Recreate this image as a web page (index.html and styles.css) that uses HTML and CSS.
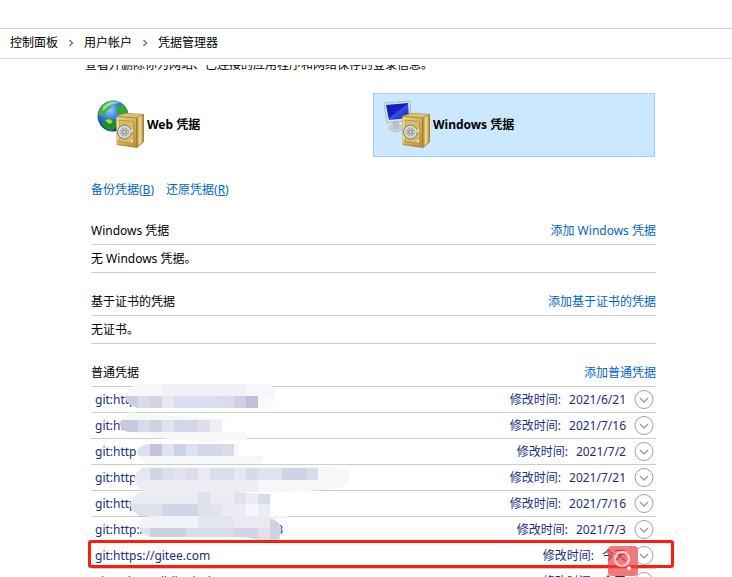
FILE: index.html
```html
<!DOCTYPE html>
<html lang="zh-CN">
<head>
<meta charset="utf-8">
<title>凭据管理器</title>
<link rel="stylesheet" href="styles.css">
</head>
<body>
<svg class="defs" aria-hidden="true">
  <defs>
    <linearGradient id="gold" x1="0" y1="0" x2="1" y2="1">
      <stop offset="0" stop-color="#ecd88c"/><stop offset=".6" stop-color="#cfae57"/><stop offset="1" stop-color="#b9933a"/>
    </linearGradient>
    <linearGradient id="gold-side" x1="0" y1="0" x2="1" y2="0">
      <stop offset="0" stop-color="#a07a24"/><stop offset=".5" stop-color="#f2e09a"/><stop offset="1" stop-color="#a88432"/>
    </linearGradient>
    <radialGradient id="sea" cx=".4" cy=".3" r=".7">
      <stop offset="0" stop-color="#8fd0ff"/><stop offset=".45" stop-color="#2b7de0"/><stop offset="1" stop-color="#0a2c8c"/>
    </radialGradient>
    <linearGradient id="screen" x1="0" y1="0" x2="1" y2="1">
      <stop offset="0" stop-color="#0a1fa8"/><stop offset=".5" stop-color="#1424c4"/><stop offset=".52" stop-color="#3a52e6"/><stop offset="1" stop-color="#1018b4"/>
    </linearGradient>
    <symbol id="safe" viewBox="0 0 30 37">
      <path d="M1 4 11 1 29 2 29 30 22 36 2 33Z" fill="#a8863a"/>
      <path d="M2 4 11 1.500 28 2.500 21 5.500Z" fill="#dcc070"/>
      <path d="M21.500 6 28.500 3V29.500L21.500 35Z" fill="url(#gold-side)"/>
      <path d="M1.500 5 21 6.500V34.500L1.500 32Z" fill="url(#gold)"/>
      <path d="M4 8 18.500 9.500V31.500L4 29.500Z" fill="#d9bc68" stroke="#b8964a"/>
      <path d="M3 9v19" stroke="#fff0b0"/>
      <circle cx="9.500" cy="20" r="7" fill="#a8a8a2" stroke="#85857d"/>
      <circle cx="9.500" cy="20" r="5.500" fill="none" stroke="#dededa" stroke-width="1.500"/>
      <path d="M9.500 14.500v11M4 20h11M5.600 16l7.800 8M13.400 16l-7.800 8" stroke="#dededa"/>
      <circle cx="9.500" cy="20" r="2" fill="#c9c9c5" stroke="#696965" stroke-width=".6"/>
      <path d="M17 17v3M17 28v2" stroke="#eee" stroke-width="1.500"/>
    </symbol>
    <symbol id="expand" viewBox="0 0 20 20">
      <circle cx="10" cy="9.500" r="9" fill="none" stroke="#a0a0a0" stroke-width="1"/>
      <path d="m6 8 4 4 4-4" fill="none" stroke="#a0a0a0" stroke-width="1.500"/>
    </symbol>
  </defs>
</svg>

<div class="toolbar"></div>
<nav class="breadcrumb" aria-label="路径">
  <a href="#">控制面板</a>
  <svg class="sep" viewBox="0 0 6 8"><path d="m1.500 1 3 3-3 3"/></svg>
  <a href="#">用户帐户</a>
  <svg class="sep" viewBox="0 0 6 8"><path d="m1.500 1 3 3-3 3"/></svg>
  <a href="#">凭据管理器</a>
</nav>

<main class="pane">
  <p class="intro">查看并删除你为网站、已连接的应用程序和网络保存的登录信息。</p>

  <div class="vaults">
    <button class="vault" type="button">
      <svg class="vault-icon" viewBox="0 0 50 50">
        <circle cx="16" cy="16" r="15.500" fill="url(#sea)"/>
        <path d="M3 9C6 4 10 2 14 1l4 2-3 2-2 4-4 2-1 4-4 1-3-2Z" fill="#4fb338"/>
        <path d="M7 20l6-2 6 4 1 4-5 5c-5 0-8-4-10-7Z" fill="#1f8f2e"/>
        <path d="M20 6l6-2c3 3 5 7 5 11l-5 2-4-3-3-1Z" fill="#36a43c"/>
        <path d="M6 7c4-5 12-7 17-4-5 0-12 2-17 8Z" fill="#d8f2ff" opacity=".6"/>
        <path d="M8 20l5-1 3 3-4 2Z" fill="#9ae04e"/>
        <use href="#safe" x="18" y="12" width="30" height="37"/>
      </svg>
      <span>Web 凭据</span>
    </button>
    <button class="vault selected" type="button">
      <svg class="vault-icon" viewBox="0 0 50 50">
        <ellipse cx="13" cy="28" rx="7" ry="3.500" fill="#cfd4d9" stroke="#a5acb4" stroke-width=".6"/>
        <path d="M9 20l7 2v7h-6Z" fill="#b9c0c8"/>
        <path d="M1 3 27 1 28 20 4 23Z" fill="#d9dfe5" stroke="#9fa9b3" stroke-width=".7"/>
        <path d="M3 5 25 3 26 18 6 20Z" fill="url(#screen)"/>
        <use href="#safe" x="18" y="12" width="30" height="37"/>
      </svg>
      <span>Windows 凭据</span>
    </button>
  </div>

  <div class="actions">
    <a href="#">备份凭据(<u>B</u>)</a>
    <a href="#">还原凭据(<u>R</u>)</a>
  </div>

  <section class="group">
    <header><h2>Windows 凭据</h2><a href="#">添加 Windows 凭据</a></header>
    <p class="empty">无 Windows 凭据。</p>
  </section>

  <section class="group">
    <header><h2>基于证书的凭据</h2><a href="#">添加基于证书的凭据</a></header>
    <p class="empty">无证书。</p>
  </section>

  <section class="group">
    <header><h2>普通凭据</h2><a href="#">添加普通凭据</a></header>
    <div class="list">
      <div class="item"><span class="name">git:http</span><span class="label">修改时间:</span><span>2021/6/21</span><button type="button" aria-label="展开"><svg><use href="#expand"/></svg></button></div>
      <div class="item"><span class="name">git:htt</span><span class="label">修改时间:</span><span>2021/7/16</span><button type="button" aria-label="展开"><svg><use href="#expand"/></svg></button></div>
      <div class="item"><span class="name">git:http</span><span class="label">修改时间:</span><span>2021/7/2</span><button type="button" aria-label="展开"><svg><use href="#expand"/></svg></button></div>
      <div class="item"><span class="name">git:http</span><span class="label">修改时间:</span><span>2021/7/21</span><button type="button" aria-label="展开"><svg><use href="#expand"/></svg></button></div>
      <div class="item"><span class="name">git:http</span><span class="label">修改时间:</span><span>2021/7/16</span><button type="button" aria-label="展开"><svg><use href="#expand"/></svg></button></div>
      <div class="item"><span class="name">git:http:/<span class="tail">3</span></span><span class="label">修改时间:</span><span>2021/7/3</span><button type="button" aria-label="展开"><svg><use href="#expand"/></svg></button></div>
      <div class="item marked">
        <span class="name">git:https://gitee.com</span><span class="label">修改时间:</span><span>今天</span>
        <svg class="search-badge" viewBox="0 0 30 30"><rect width="30" height="30" rx="4" fill="#ef3e3e" opacity=".7"/><circle cx="14" cy="13" r="7" fill="none" stroke="#fff" stroke-opacity=".75" stroke-width="2"/><circle cx="21" cy="22" r="2" fill="#fff" fill-opacity=".85"/></svg>
        <button type="button" aria-label="展开"><svg><use href="#expand"/></svg></button>
      </div>
      <div class="item"><span class="name">virtualapp/didlogical</span><span class="label">修改时间:</span><span>今天</span><button type="button" aria-label="展开"><svg><use href="#expand"/></svg></button></div>

      <svg class="mosaic" viewBox="120 384 240 160" aria-hidden="true">
        <defs>
          <clipPath id="m1"><path d="M138 384h130q8 4 7 12l-4 12H138q-12-3-13-12 2-8 13-12Z"/></clipPath>
          <clipPath id="m2"><path d="M130 412q40 4 100 7l-2 13h18v8q-50 3-86-2l-32-6q-8-3-8-8 1-8 10-12Z"/></clipPath>
          <clipPath id="m3"><path d="M148 444h90v12h26l-4 8H146q-9-10-9-12 1-6 11-8Z"/></clipPath>
          <clipPath id="m4"><path d="M146 466h175l26 4q6 8-2 16-20 6-80 6H146q-10-4-12-12 1-9 12-14Z"/></clipPath>
          <clipPath id="m5"><path d="M140 492h90l40 2v22H140q-9-5-10-12 2-8 10-12Z"/></clipPath>
          <clipPath id="m6"><path d="M150 516h138v3h-16q10 3 9 13l-2 8h-21q-8-3-20-3h-88q-10-3-12-12 3-7 12-9Z"/></clipPath>
        </defs>
        <g clip-path="url(#m1)">
          <rect x="120" y="384" width="160" height="24" fill="#f7f7f9"/><rect x="162" y="384" width="84" height="12" fill="#f0f0f5"/>
          <rect x="120" y="396" width="18" height="12" fill="#c9cee2"/><rect x="138" y="396" width="12" height="12" fill="#d8dde9"/><rect x="150" y="396" width="12" height="12" fill="#d2d3e3"/><rect x="162" y="396" width="12" height="12" fill="#e6e9f3"/><rect x="174" y="396" width="48" height="12" fill="#dadded"/><rect x="222" y="396" width="12" height="12" fill="#d8dbe9"/><rect x="234" y="396" width="12" height="12" fill="#cfd0e3"/><rect x="246" y="396" width="12" height="12" fill="#c0c0dc"/><rect x="258" y="396" width="14" height="12" fill="#f8fcff"/>
        </g>
        <g clip-path="url(#m2)">
          <rect x="120" y="410" width="150" height="34" fill="#f7f7f8"/>
          <rect x="120" y="420" width="18" height="12" fill="#c7c9df"/><rect x="138" y="420" width="12" height="12" fill="#d6dce9"/><rect x="150" y="420" width="12" height="12" fill="#d0d2e3"/><rect x="162" y="420" width="12" height="12" fill="#e0e4f0"/><rect x="174" y="420" width="24" height="12" fill="#d3d6e6"/><rect x="198" y="420" width="12" height="12" fill="#dfdeea"/><rect x="210" y="420" width="12" height="12" fill="#ebeef7"/><rect x="222" y="420" width="10" height="12" fill="#fff"/>
        </g>
        <g clip-path="url(#m3)">
          <rect x="130" y="440" width="140" height="28" fill="#f7f7f8"/>
          <rect x="136" y="444" width="14" height="12" fill="#dbe0ec"/><rect x="150" y="444" width="12" height="12" fill="#c4c4de"/><rect x="162" y="444" width="12" height="12" fill="#e0e4f0"/><rect x="174" y="444" width="12" height="12" fill="#ccd2e6"/><rect x="186" y="444" width="12" height="12" fill="#dce2ee"/><rect x="198" y="444" width="24" height="12" fill="#d3d7e7"/><rect x="222" y="444" width="12" height="12" fill="#d8dcea"/>
        </g>
        <g clip-path="url(#m4)">
          <rect x="130" y="464" width="220" height="28" fill="#f7f7f9"/>
          <rect x="130" y="468" width="20" height="12" fill="#e6e7f0"/><rect x="150" y="468" width="12" height="12" fill="#d2d5e7"/><rect x="162" y="468" width="12" height="12" fill="#dcdfeb"/><rect x="174" y="468" width="12" height="12" fill="#e4e4ee"/><rect x="186" y="468" width="12" height="12" fill="#dbdeea"/><rect x="198" y="468" width="12" height="12" fill="#e9eaf2"/><rect x="210" y="468" width="24" height="12" fill="#dadeeb"/><rect x="234" y="468" width="12" height="12" fill="#e6e8f1"/><rect x="246" y="468" width="12" height="12" fill="#d7daea"/><rect x="258" y="468" width="24" height="12" fill="#e0e2ed"/><rect x="282" y="468" width="24" height="12" fill="#d0d1e3"/><rect x="306" y="468" width="12" height="12" fill="#d6dceb"/>
          <rect x="130" y="480" width="128" height="12" fill="#ededf3"/>
        </g>
        <g clip-path="url(#m5)">
          <rect x="130" y="492" width="140" height="24" fill="#ebecf3"/>
          <rect x="130" y="504" width="32" height="12" fill="#dde1ee"/><rect x="162" y="504" width="36" height="12" fill="#d2d5e6"/><rect x="198" y="492" width="12" height="24" fill="#dde1eb"/><rect x="210" y="504" width="12" height="12" fill="#e2e3ed"/><rect x="222" y="504" width="12" height="12" fill="#ebebf2"/><rect x="234" y="492" width="12" height="12" fill="#dfe2ed"/><rect x="246" y="504" width="12" height="12" fill="#f4f6fa"/><rect x="258" y="494" width="12" height="10" fill="#d8dbe9"/>
        </g>
        <g clip-path="url(#m6)">
          <rect x="130" y="516" width="160" height="26" fill="#f2f3f6"/>
          <rect x="198" y="516" width="36" height="12" fill="#e4e6ee"/><rect x="234" y="516" width="36" height="12" fill="#e9eaf2"/>
          <rect x="130" y="528" width="20" height="12" fill="#dfe2ed"/><rect x="150" y="528" width="36" height="12" fill="#cdcfe2"/><rect x="186" y="528" width="48" height="12" fill="#d9dcea"/><rect x="234" y="528" width="24" height="12" fill="#d2d4e4"/><rect x="258" y="528" width="12" height="14" fill="#e2dfe9"/><rect x="270" y="519" width="14" height="21" fill="#d0d2e3"/>
        </g>
      </svg>
    </div>
  </section>
</main>
</body>
</html>
```
FILE: styles.css
```css
* { box-sizing: border-box; }

body {
  margin: 0;
  height: 100vh;
  overflow: hidden;
  display: flex;
  flex-direction: column;
  background: #fff;
  color: #000;
  font: 12px/16px "Noto Sans", "Noto Sans CJK SC", sans-serif;
}

a { color: #0066cc; text-decoration: none; }
h2, p { margin: 0; font-size: 12px; font-weight: 400; }
button { border: 0; padding: 0; background: none; font: inherit; color: inherit; }
.defs { position: absolute; width: 0; height: 0; }

.toolbar { flex: none; height: 28px; }

.breadcrumb {
  flex: none;
  display: flex;
  align-items: center;
  gap: 10px;
  height: 31px;
  padding: 0 10px 2px;
  border: 1px solid #d9d9d9;
  border-width: 1px 0;
}
.breadcrumb a { color: #000; }
.sep { width: 6px; height: 8px; fill: none; stroke: #777; stroke-width: 1.5; }

.pane {
  flex: 1;
  min-height: 0;
  margin-top: 6px;
  padding: 0 76px 0 91px;
  overflow: hidden;
}

.intro { margin: -8px 0 0 -6px; }

.vaults {
  display: grid;
  grid-template-columns: 1fr 1fr;
  gap: 4px;
  margin: 20px 1px 0 -4px;
}
.vault {
  display: flex;
  align-items: center;
  height: 64px;
  padding: 0 9px;
  border: 1px solid transparent;
  font-weight: 700;
}
.vault.selected { background: #cce8ff; border-color: #99d1ff; }
.vault-icon { width: 50px; height: 50px; }

.actions { display: flex; gap: 12px; margin-top: 25px; }

.group { margin-top: 14px; }
.actions + .group { margin-top: 18px; }
.group header {
  display: flex;
  justify-content: space-between;
  align-items: center;
  height: 29px;
  padding-top: 2px;
  border-bottom: 1px solid #ccc;
}
.empty { padding: 6px 0 5px; border-bottom: 1px solid #ccc; }

.list { position: relative; }
.item {
  position: relative;
  display: flex;
  align-items: center;
  height: 26px;
  padding: 0 2px 0 4px;
  border-bottom: 1px solid #ccc;
  color: #1a2d85;
}
.name { flex: 1; }
.label { margin-right: 8px; }
.tail { margin-left: 132px; }
.item button { display: flex; margin-left: 8px; }
.item button svg { width: 20px; height: 20px; }

.marked::after {
  content: "";
  position: absolute;
  inset: -3px -18px 0 -3px;
  border: 3px solid #fd1d10;
  border-radius: 3px;
  pointer-events: none;
  z-index: 2;
}
.search-badge {
  position: absolute;
  right: 18px;
  top: 3px;
  width: 30px;
  height: 30px;
  z-index: 3;
}
.marked button { position: relative; z-index: 3; }

.mosaic {
  position: absolute;
  left: 29px;
  top: -3px;
  width: 240px;
  height: 160px;
  pointer-events: none;
}
```
